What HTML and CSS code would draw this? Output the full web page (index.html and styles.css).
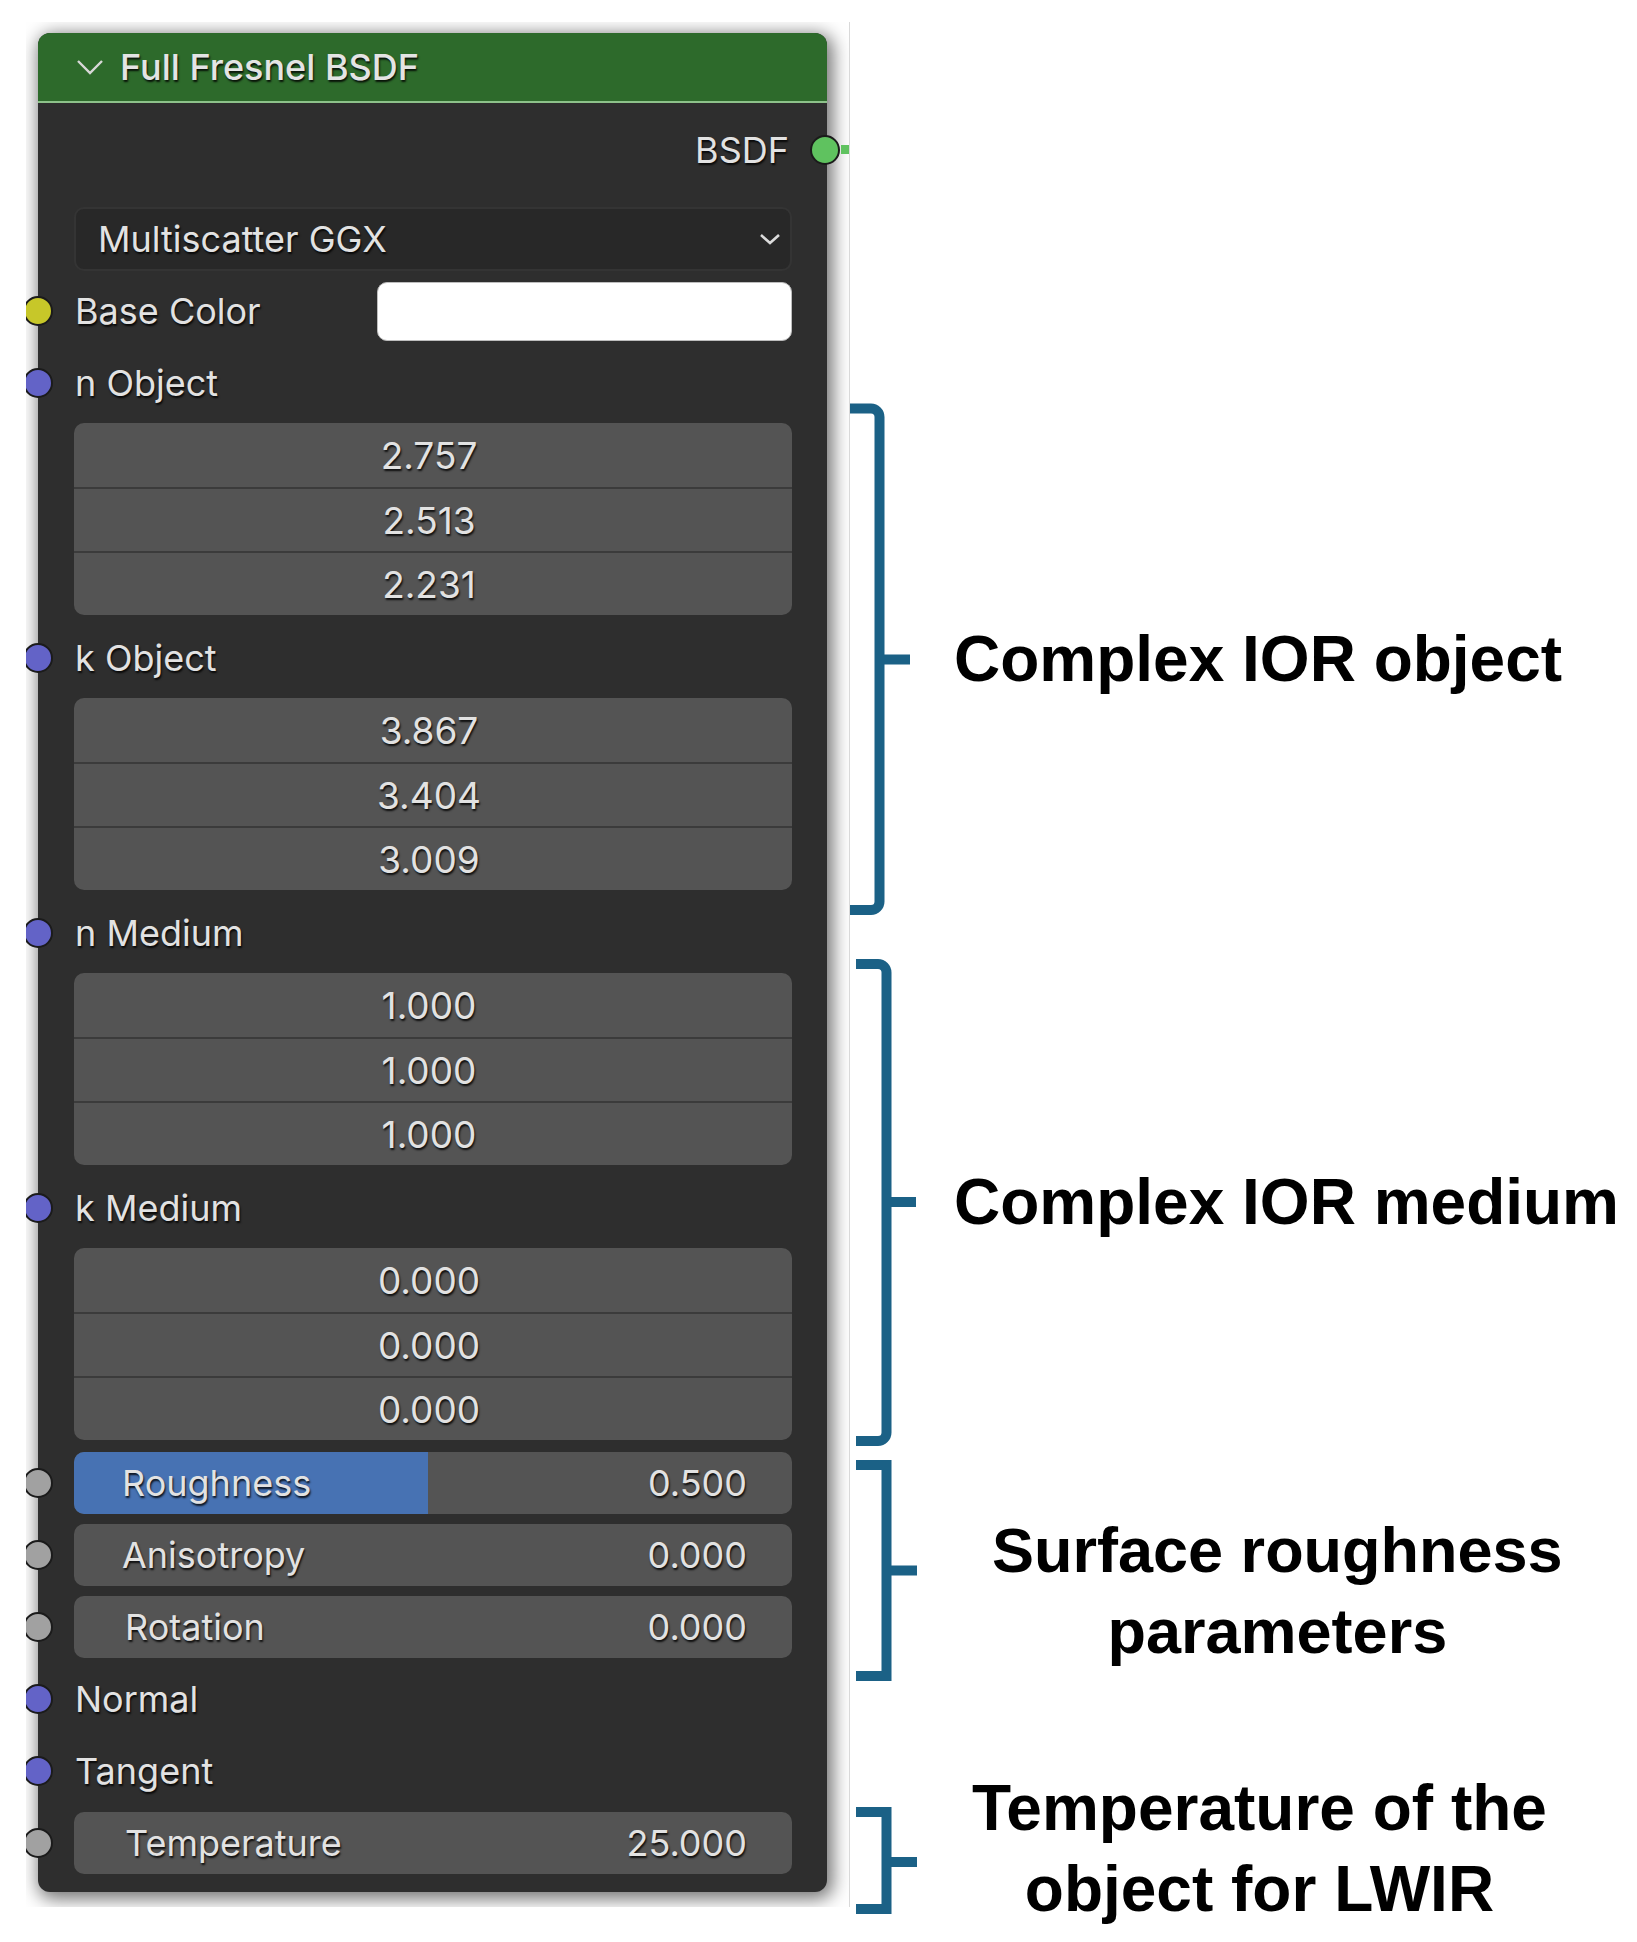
FILE: index.html
```html
<!DOCTYPE html>
<html lang="en">
<head>
<meta charset="utf-8">
<title>Full Fresnel BSDF</title>
<link rel="stylesheet" href="styles.css">
</head>
<body>
<main class="figure">
  <section class="canvas">
    <div class="node">
      <header class="node-header">
        <svg class="collapse" viewBox="0 0 28 16"><polyline points="2,2 14,14 26,2"/></svg>
        <span class="node-title">Full Fresnel BSDF</span>
      </header>
      <div class="node-body">
        <div class="row row-output">
          <span class="label">BSDF</span>
          <span class="socket socket-out shader"></span>
          <span class="link-stub"></span>
        </div>

        <div class="dropdown">
          <span class="dropdown-text">Multiscatter GGX</span>
          <svg class="dropdown-arrow" viewBox="0 0 22 12"><polyline points="2,2 11,10 20,2"/></svg>
        </div>

        <div class="row">
          <span class="socket color"></span>
          <span class="label label-grow">Base Color</span>
          <span class="swatch"></span>
        </div>

        <div class="vector-group">
          <div class="row"><span class="socket vector"></span><span class="label">n Object</span></div>
          <div class="vector-box">
            <div class="vector-cell">2.757</div>
            <div class="vector-cell">2.513</div>
            <div class="vector-cell">2.231</div>
          </div>
        </div>

        <div class="vector-group">
          <div class="row"><span class="socket vector"></span><span class="label">k Object</span></div>
          <div class="vector-box">
            <div class="vector-cell">3.867</div>
            <div class="vector-cell">3.404</div>
            <div class="vector-cell">3.009</div>
          </div>
        </div>

        <div class="vector-group">
          <div class="row"><span class="socket vector"></span><span class="label">n Medium</span></div>
          <div class="vector-box">
            <div class="vector-cell">1.000</div>
            <div class="vector-cell">1.000</div>
            <div class="vector-cell">1.000</div>
          </div>
        </div>

        <div class="vector-group">
          <div class="row"><span class="socket vector"></span><span class="label">k Medium</span></div>
          <div class="vector-box">
            <div class="vector-cell">0.000</div>
            <div class="vector-cell">0.000</div>
            <div class="vector-cell">0.000</div>
          </div>
        </div>

        <div class="row row-field">
          <span class="socket float"></span>
          <div class="field">
            <div class="field-fill" style="width:49.3%"></div>
            <span class="field-name">Roughness</span>
            <span class="field-value">0.500</span>
          </div>
        </div>

        <div class="row row-field">
          <span class="socket float"></span>
          <div class="field">
            <span class="field-name">Anisotropy</span>
            <span class="field-value">0.000</span>
          </div>
        </div>

        <div class="row row-field">
          <span class="socket float"></span>
          <div class="field">
            <span class="field-name field-name-inset">Rotation</span>
            <span class="field-value">0.000</span>
          </div>
        </div>

        <div class="row"><span class="socket vector"></span><span class="label">Normal</span></div>
        <div class="row"><span class="socket vector"></span><span class="label">Tangent</span></div>

        <div class="row row-field">
          <span class="socket float"></span>
          <div class="field">
            <span class="field-name field-name-inset">Temperature</span>
            <span class="field-value">25.000</span>
          </div>
        </div>
      </div>
    </div>
  </section>

  <aside class="notes">
    <div class="note note-object">
      <svg class="brace" width="70" height="513" viewBox="0 0 70 513">
        <path d="M0 5.5 H21 A8.5 8.5 0 0 1 29.5 14 V498.5 A8.5 8.5 0 0 1 21 507 H0 M29.5 256.5 H60"/>
      </svg>
      <p class="note-text">Complex IOR object</p>
    </div>
    <div class="note note-medium">
      <svg class="brace" width="70" height="489" viewBox="0 0 70 489">
        <path d="M6 6 H28 A8.5 8.5 0 0 1 36.5 14.5 V474.5 A8.5 8.5 0 0 1 28 483 H6 M36.5 244 H66"/>
      </svg>
      <p class="note-text">Complex IOR medium</p>
    </div>
    <div class="note note-rough">
      <svg class="brace" width="70" height="221" viewBox="0 0 70 221">
        <path d="M6 5 H36.5 V216 H6 M36.5 110.5 H67"/>
      </svg>
      <p class="note-text">Surface roughness<br>parameters</p>
    </div>
    <div class="note note-temp">
      <svg class="brace" width="70" height="107" viewBox="0 0 70 107">
        <path d="M6 5 H36.5 V102 H6 M36.5 55 H67"/>
      </svg>
      <p class="note-text">Temperature of the<br>object for LWIR</p>
    </div>
  </aside>
</main>
</body>
</html>
```

FILE: styles.css
```css
* {
  box-sizing: border-box;
}

html,
body {
  margin: 0;
  background: #ffffff;
}

body {
  width: 1637px;
  height: 1942px;
  overflow: hidden;
}

.figure {
  display: flex;
  align-items: flex-start;
}

/* node editor capture */
.canvas {
  flex: none;
  width: 824px;
  height: 1885px;
  margin: 22px 0 0 26px;
  padding: 11px 0 0 12px;
  background: #ffffff;
  border-right: 1px solid #d9d9d9;
  overflow: hidden;
}

.node {
  width: 789px;
  background: #2e2e2e;
  border-radius: 12px;
  box-shadow: 3px 4px 18px 3px rgba(0, 0, 0, 0.55);
  font-family: Inter, "Noto Sans", sans-serif;
  font-size: 36px;
  color: #e2e2e2;
  text-shadow: 1px 2px 2px rgba(0, 0, 0, 0.85);
}

.node-header {
  height: 70px;
  display: flex;
  align-items: center;
  gap: 16px;
  padding-left: 38px;
  background: #2d6a2b;
  border-bottom: 2px solid #8dc28a;
  border-radius: 12px 12px 0 0;
}

.collapse {
  width: 28px;
  height: 16px;
  fill: none;
  stroke: #d8d8d8;
  stroke-width: 2.4;
}

.node-title {
  font-size: 36px;
  font-weight: 500;
  color: #e4e4e4;
}

.node-body {
  padding: 11px 0 13px;
}

.row {
  position: relative;
  height: 72px;
  display: flex;
  align-items: center;
  padding: 0 35px 0 37px;
}

.row-output {
  justify-content: flex-end;
  padding-right: 38px;
}

.row-field {
  padding-left: 36px;
}

.label {
  white-space: nowrap;
}

.label-grow {
  flex: 1;
}

/* sockets sit on the node border */
.socket {
  position: absolute;
  left: -15px;
  top: 50%;
  width: 30px;
  height: 30px;
  margin-top: -15px;
  border-radius: 50%;
  border: 2px solid #1b1b1b;
}

.socket-out {
  left: auto;
  right: -13px;
}

.shader {
  background: #5fc25f;
}

.color {
  background: #c7c729;
}

.vector {
  background: #6363c7;
}

.float {
  background: #a1a1a1;
}

.link-stub {
  position: absolute;
  right: -26px;
  top: 50%;
  width: 12px;
  height: 9px;
  margin-top: -5px;
  background: #5fc25f;
  border-radius: 0 4px 4px 0;
}

.dropdown {
  height: 64px;
  margin: 21px 35px 4px 36px;
  display: flex;
  align-items: center;
  justify-content: space-between;
  padding: 0 9px 0 22px;
  background: #282828;
  border: 2px solid #343434;
  border-radius: 10px;
  font-size: 36px;
}

.dropdown-arrow {
  width: 22px;
  height: 12px;
  fill: none;
  stroke: #dcdcdc;
  stroke-width: 2.6;
}

.swatch {
  flex: none;
  width: 415px;
  height: 59px;
  background: #ffffff;
  border: 1px solid #bdbdbd;
  border-radius: 10px;
}

.vector-box {
  height: 192px;
  margin: 4px 35px 7px 36px;
  background: #545454;
  border-radius: 10px;
  overflow: hidden;
}

.vector-cell {
  height: 64px;
  display: flex;
  align-items: center;
  justify-content: center;
  padding-right: 8px;
  font-size: 37px;
}

.vector-cell + .vector-cell {
  border-top: 2px solid #3b3b3b;
}

.field {
  position: relative;
  flex: 1;
  height: 62px;
  display: flex;
  align-items: center;
  justify-content: space-between;
  padding: 0 45px 0 48px;
  background: #545454;
  border-radius: 10px;
  overflow: hidden;
}

.field-fill {
  position: absolute;
  left: 0;
  top: 0;
  bottom: 0;
  background: #4772b3;
}

.field-name,
.field-value {
  position: relative;
}

.field-name-inset {
  margin-left: 3px;
}

/* annotations */
.notes {
  flex: none;
  width: 787px;
  display: flex;
  flex-direction: column;
  font-family: "Liberation Sans", Arial, sans-serif;
  font-weight: 700;
  font-size: 64px;
  line-height: 81px;
  color: #000000;
}

.note {
  display: flex;
  align-items: center;
}

.brace {
  flex: none;
  fill: none;
  stroke: #1b6186;
  stroke-width: 10;
}

.note-text {
  margin: 0;
  white-space: nowrap;
  text-align: center;
}

.note-object {
  margin-top: 403px;
  height: 513px;
}

.note-object .note-text,
.note-medium .note-text {
  margin-left: 34px;
}

.note-medium {
  margin-top: 42px;
  height: 489px;
}

.note-rough {
  margin-top: 13px;
  height: 221px;
}

.note-rough .note-text {
  margin-left: 72px;
  margin-top: 40px;
  font-size: 63px;
}

.note-temp {
  margin-top: 126px;
  height: 107px;
}

.note-temp .note-text {
  margin-left: 52px;
  margin-bottom: 24px;
}
```
